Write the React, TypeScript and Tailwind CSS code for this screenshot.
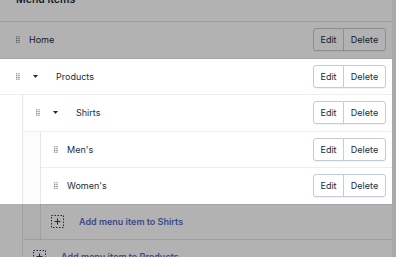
import React from "react";

function DragHandle() {
  return (
    <svg width="4" height="7" viewBox="0 0 4 7" className="shrink-0">
      {[0.8, 2.6, 4.4, 6.2].map((y) => (
        <g key={y}>
          <circle cx="0.8" cy={y} r="0.65" fill="#5c6670" />
          <circle cx="3" cy={y} r="0.65" fill="#5c6670" />
        </g>
      ))}
    </svg>
  );
}

function Caret() {
  return (
    <svg width="5" height="3" viewBox="0 0 5 3" className="shrink-0">
      <path d="M0 0h5L2.5 3z" fill="#212b36" />
    </svg>
  );
}

function AddIcon() {
  return (
    <svg width="13" height="13" viewBox="0 0 13 13" className="shrink-0">
      <rect x="0.5" y="0.5" width="12" height="12" fill="none" stroke="#2f3a73" strokeWidth="1" strokeDasharray="1.5 1.5" />
      <path d="M6.5 3.5v6M3.5 6.5h6" stroke="#2f3a73" strokeWidth="1.1" />
    </svg>
  );
}

function Actions() {
  return (
    <div className="ml-auto flex">
      <button className="h-[23px] w-[31px] rounded-l-[3px] border border-[#c4cdd5] bg-white text-[9px] text-[#212b36] shadow-[0_1px_0_rgba(22,29,37,0.05)]">
        Edit
      </button>
      <button className="-ml-px h-[23px] w-[43px] rounded-r-[3px] border border-[#c4cdd5] bg-white text-[9px] text-[#212b36] shadow-[0_1px_0_rgba(22,29,37,0.05)]">
        Delete
      </button>
    </div>
  );
}

function Row({ label, caret, indent }: { label: string; caret?: boolean; indent: string }) {
  return (
    <div className={`flex h-[36.5px] items-center border-b border-[#ebeef0] bg-white pr-[6px] ${indent}`}>
      <DragHandle />
      {caret ? (
        <>
          <span className="ml-[13px]">
            <Caret />
          </span>
          <span className="ml-[18px] text-[9px] text-[#212b36]">{label}</span>
        </>
      ) : (
        <span className="ml-[9px] text-[9px] text-[#212b36]">{label}</span>
      )}
      <Actions />
    </div>
  );
}

function AddRow({ label, iconOffset }: { label: string; iconOffset: string }) {
  return (
    <div className={`flex h-[34px] items-center bg-white ${iconOffset}`}>
      <AddIcon />
      <span className="ml-[15px] text-[9px] font-semibold text-[#5c6ac4]">{label}</span>
    </div>
  );
}

export default function App() {
  return (
    <div
      className="relative h-[257px] w-[396px] overflow-hidden bg-[#f1f2f3]"
      style={{ fontFamily: "Inter, 'Noto Sans', sans-serif" }}
    >
      <div className="w-[392px] bg-white">
        <div className="flex h-[22px] items-start border-b border-[#dfe3e8] px-[16px]">
          <h2 className="-mt-[6px] text-[10.5px] font-semibold leading-[12px] text-[#212b36]">Menu items</h2>
        </div>

        <Row label="Home" indent="pl-[16px]" />

        <div className="bg-white">
          <Row label="Products" caret indent="pl-[16px]" />
          <div className="ml-[22px] border-l border-[#e4e7ea] bg-[#fcfcfd]">
            <Row label="Shirts" caret indent="pl-[13px]" />
            <div className="ml-[17px] border-l border-[#e4e7ea]">
              <Row label="Men's" indent="pl-[13px]" />
              <Row label="Women's" indent="pl-[13px]" />
              <AddRow label="Add menu item to Shirts" iconOffset="pl-[10px]" />
            </div>
            <div className="border-t border-[#dfe3e8]">
              <AddRow label="Add menu item to Products" iconOffset="pl-[10px]" />
            </div>
          </div>
        </div>
      </div>

      <div className="pointer-events-none absolute left-0 top-[59px] h-[145px] w-[392px] shadow-[0_0_0_999px_rgba(0,0,0,0.3)]" />
    </div>
  );
}
